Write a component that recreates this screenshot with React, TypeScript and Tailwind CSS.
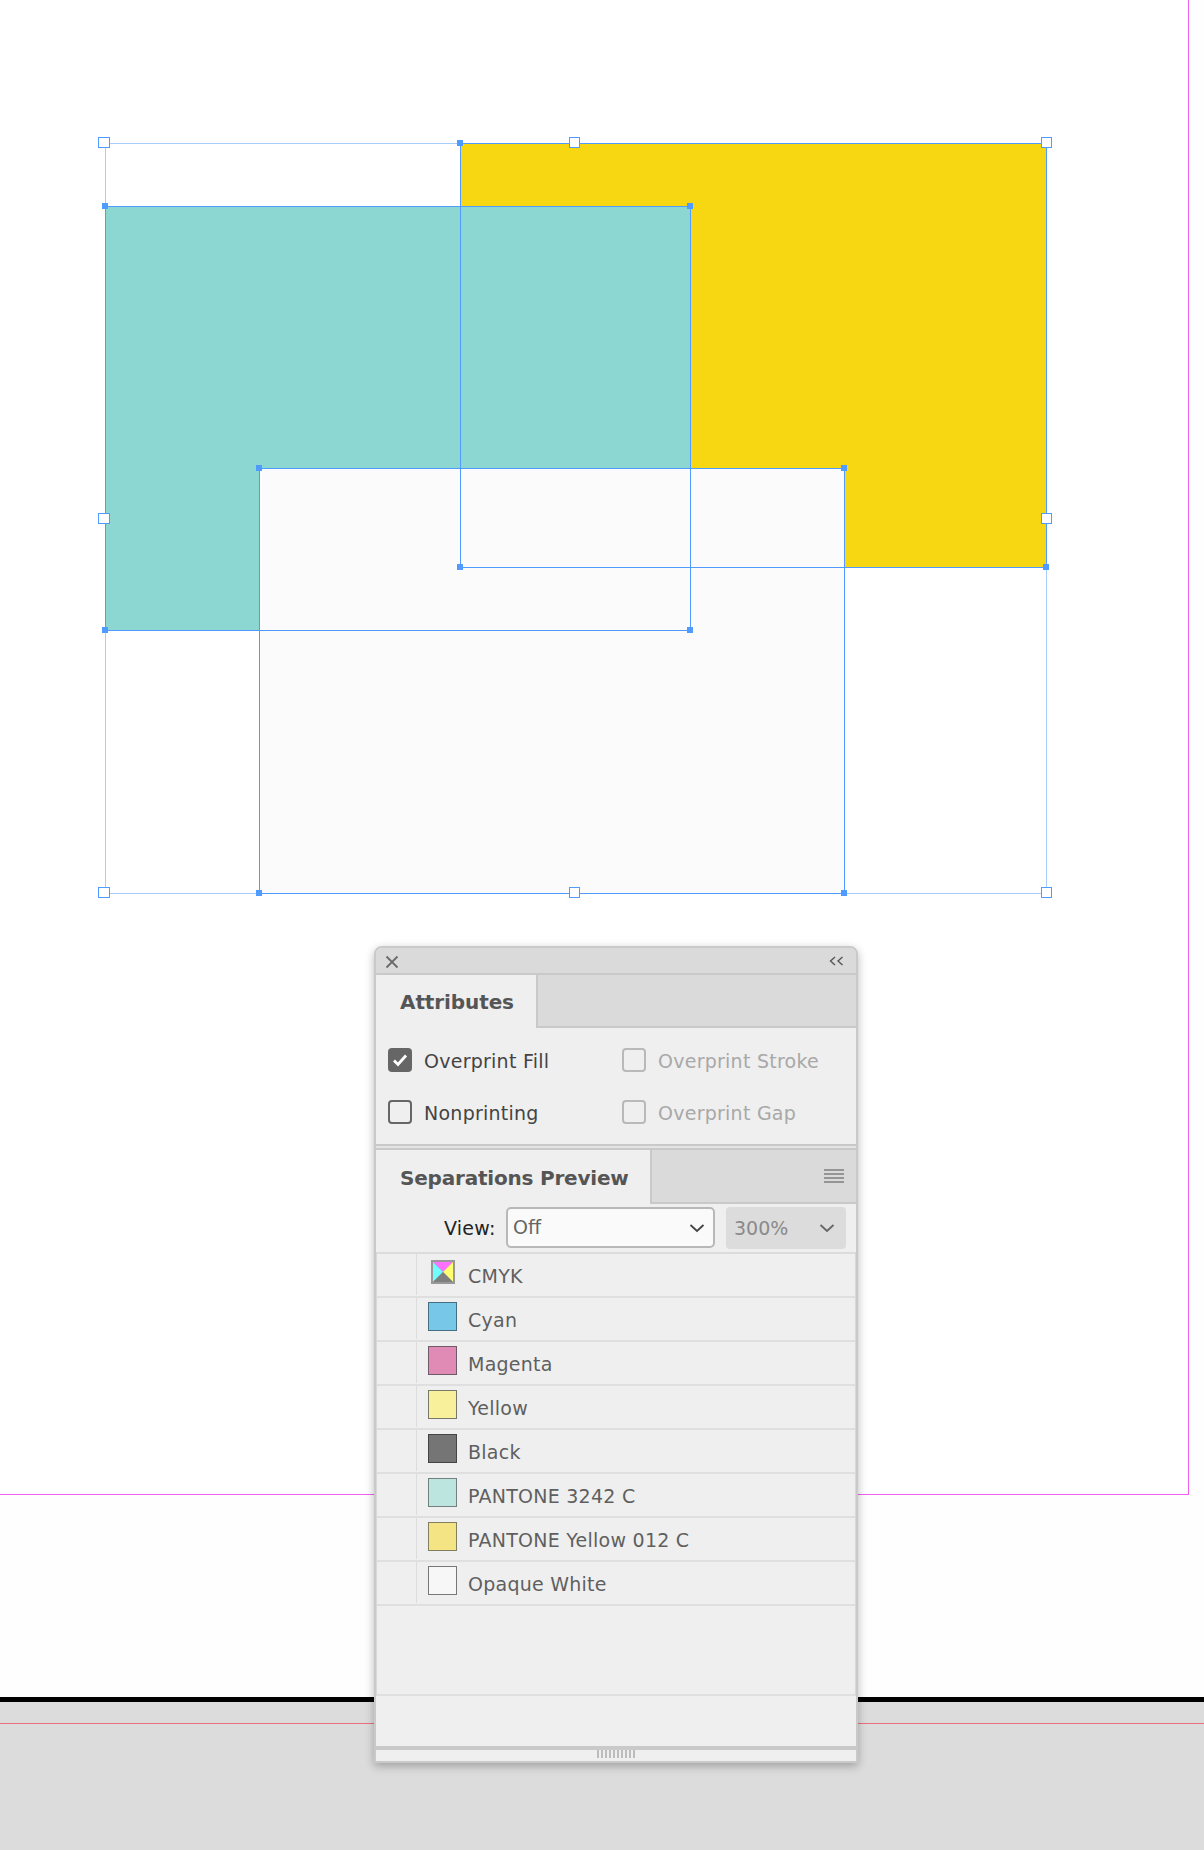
import React from "react";

const font = "font-['DejaVu_Sans','Liberation_Sans',sans-serif]";

const Big = ({ className }: { className: string }) => (
  <div className={`absolute h-[11px] bg-white border border-[#4f9bff] ${className}`} />
);

const Dot = ({ className }: { className: string }) => (
  <div className={`absolute w-[6px] h-[6px] bg-[#4f9bff] ${className}`} />
);

const Check = ({ label, on, off }: { label: string; on?: boolean; off?: boolean }) => (
  <div className="flex items-center gap-[12px] h-[24px]">
    {on ? (
      <div className="w-[24px] h-[24px] rounded-[4px] bg-[#666666] flex items-center justify-center">
        <svg width="16" height="14" viewBox="0 0 16 14" fill="none">
          <path d="M2 7.5 L6 11.5 L14 2.5" stroke="#ffffff" strokeWidth="2.8" />
        </svg>
      </div>
    ) : (
      <div className={`w-[24px] h-[24px] rounded-[4px] border-2 ${off ? "border-[#b9b9b9]" : "border-[#666666]"}`} />
    )}
    <span className={`mt-[2px] text-[19px] tracking-[0.25px] ${off ? "text-[#a8a8a8]" : "text-[#444444]"}`}>{label}</span>
  </div>
);

const Chevron = ({ color }: { color: string }) => (
  <svg width="16" height="10" viewBox="0 0 16 10" fill="none">
    <path d="M1.5 2 L8 8 L14.5 2" stroke={color} strokeWidth="1.8" />
  </svg>
);

const Row = ({ name, swatch }: { name: string; swatch?: string }) => (
  <div className="flex h-[44px] border-b-2 border-[#dfdfdf]">
    <div className="w-[40px] border-r border-[#dcdcdc] h-[41px]" />
    {swatch ? (
      <div className={`ml-[11px] mt-[4px] w-[29px] h-[29px] border ${swatch}`} />
    ) : (
      <svg className="ml-[14px] mt-[6px]" width="24" height="24" viewBox="0 0 24 24">
        <rect width="24" height="24" fill="#999999" />
        <path d="M2 2 H22 L12 12 Z" fill="#ff70ff" />
        <path d="M2 2 V22 L12 12 Z" fill="#70ffff" />
        <path d="M22 2 V22 L12 12 Z" fill="#ffff70" />
        <path d="M2 22 H22 L12 12 Z" fill="#7f7f7f" />
      </svg>
    )}
    <span className={`${swatch ? "ml-[11px]" : "ml-[13px]"} mt-[9px] text-[19px] leading-[26px] tracking-[0.25px] text-[#5f5f5f]`}>{name}</span>
  </div>
);

const rows = [
  { name: "Cyan", swatch: "bg-[#76c7e8] border-[#456f80]" },
  { name: "Magenta", swatch: "bg-[#e08bb6] border-[#6f5a68]" },
  { name: "Yellow", swatch: "bg-[#f8f09a] border-[#77776a]" },
  { name: "Black", swatch: "bg-[#757575] border-[#444444]" },
  { name: "PANTONE 3242 C", swatch: "bg-[#bde5e0] border-[#728080]" },
  { name: "PANTONE Yellow 012 C", swatch: "bg-[#f5e483] border-[#808060]" },
  { name: "Opaque White", swatch: "bg-[#f7f7f7] border-[#777777]" },
];

export default function App() {
  return (
    <div className={`relative w-[1204px] h-[1850px] flex flex-col overflow-hidden bg-[#dcdcdc] ${font}`}>
      {/* page */}
      <div className="h-[1697px] bg-[#fefefe]">
        <div className="w-[1189px] h-[1495px] bg-white border-r border-b border-[#f060f0]" />
      </div>
      <div className="h-[5px] bg-black" />
      <div className="mt-[21px] h-px bg-[#e8707f]" />

      {/* artwork fills */}
      <div className="absolute left-[460px] top-[143px] w-[587px] h-[425px] bg-[#f7d712]" />
      <div className="absolute left-[105px] top-[206px] w-[586px] h-[425px] bg-[#8dd7d2]" />
      <div className="absolute left-[259px] top-[468px] w-[586px] h-[426px] bg-[#fbfbfb]" />

      {/* selection outlines */}
      <div className="absolute left-[105px] top-[143px] w-[942px] h-[751px] border border-[#a8cdfb]" />
      <div className="absolute left-[460px] top-[143px] w-[587px] h-[425px] border border-[#4f9bff]" />
      <div className="absolute left-[105px] top-[206px] w-[586px] h-[425px] border border-[#4f9bff]" />
      <div className="absolute left-[259px] top-[468px] w-[586px] h-[426px] border border-[#4f9bff]" />

      <Dot className="left-[457px] top-[140px]" />
      <Dot className="left-[457px] top-[564px]" />
      <Dot className="left-[1043px] top-[564px]" />
      <Dot className="left-[102px] top-[203px]" />
      <Dot className="left-[687px] top-[203px]" />
      <Dot className="left-[102px] top-[627px]" />
      <Dot className="left-[687px] top-[627px]" />
      <Dot className="left-[256px] top-[465px]" />
      <Dot className="left-[841px] top-[465px]" />
      <Dot className="left-[256px] top-[890px]" />
      <Dot className="left-[841px] top-[890px]" />

      <Big className="w-[12px] left-[98px] top-[137px]" />
      <Big className="w-[11px] left-[569px] top-[137px]" />
      <Big className="w-[11px] left-[1041px] top-[137px]" />
      <Big className="w-[12px] left-[98px] top-[513px]" />
      <Big className="w-[11px] left-[1041px] top-[513px]" />
      <Big className="w-[12px] left-[98px] top-[887px]" />
      <Big className="w-[11px] left-[569px] top-[887px]" />
      <Big className="w-[11px] left-[1041px] top-[887px]" />

      {/* panel */}
      <div className="absolute left-[374px] top-[946px] w-[484px] h-[817px] flex flex-col border-2 border-[#c9c9c9] rounded-t-[8px] bg-[#efefef] shadow-[0_3px_10px_rgba(0,0,0,0.28)]">
        <div className="h-[27px] shrink-0 flex items-center justify-between pl-[9px] pr-[12px] bg-[#dadada] border-b-2 border-[#c9c9c9] rounded-t-[6px]">
          <svg className="mt-[2px]" width="14" height="14" viewBox="0 0 14 14" fill="none">
            <path d="M1.5 1.5 L12.5 12.5 M12.5 1.5 L1.5 12.5" stroke="#6a6a6a" strokeWidth="1.8" />
          </svg>
          <svg width="15" height="10" viewBox="0 0 15 10" fill="none">
            <path d="M6 1 L1.5 5 L6 9 M13.5 1 L9 5 L13.5 9" stroke="#555555" strokeWidth="1.4" />
          </svg>
        </div>

        <div className="h-[53px] shrink-0 flex">
          <div className="w-[162px] border-r-2 border-[#c9c9c9] pl-[24px] pt-[13px] text-[20px] font-bold leading-[28px] tracking-[-0.1px] text-[#555555]">Attributes</div>
          <div className="flex-1 bg-[#dadada] border-b-2 border-[#c9c9c9]" />
        </div>

        <div className="h-[116px] shrink-0 pt-[20px] pl-[12px] grid grid-cols-[234px_1fr] auto-rows-[24px] gap-y-[28px]">
          <Check label="Overprint Fill" on />
          <Check label="Overprint Stroke" off />
          <Check label="Nonprinting" />
          <Check label="Overprint Gap" off />
        </div>

        <div className="h-[6px] shrink-0 bg-[#e4e4e4] border-y-2 border-[#c9c9c9]" />

        <div className="h-[54px] shrink-0 flex">
          <div className="w-[276px] border-r-2 border-[#c9c9c9] pl-[24px] pt-[14px] text-[20px] font-bold leading-[28px] tracking-[-0.2px] whitespace-nowrap text-[#555555]">Separations Preview</div>
          <div className="flex-1 bg-[#dadada] border-b-2 border-[#c9c9c9] flex justify-end items-center pr-[12px]">
            <svg className="mt-[1px]" width="20" height="15" viewBox="0 0 20 15">
              <path d="M0 1 H20 M0 5 H20 M0 9 H20 M0 13 H20" stroke="#7f7f7f" strokeWidth="1.6" />
            </svg>
          </div>
        </div>

        <div className="h-[48px] shrink-0 flex items-start pt-[3px]">
          <span className="ml-[68px] w-[62px] mt-[8px] text-[19px] leading-[26px] tracking-[0.25px] text-[#222222]">View:</span>
          <div className="w-[209px] h-[41px] flex items-center justify-between pl-[5px] pr-[8px] bg-[#fafafa] border-2 border-[#b8b8b8] rounded-[5px] text-[19px] text-[#666666]">
            Off
            <Chevron color="#444444" />
          </div>
          <div className="ml-[11px] w-[120px] h-[42px] flex items-center justify-between pl-[8px] pr-[11px] bg-[#dcdcdc] rounded-[4px] text-[19px] text-[#8a8a8a]">
            300%
            <Chevron color="#666666" />
          </div>
        </div>

        <div className="flex-1 flex flex-col border-x border-[#d8d8d8]">
          <div className="border-t-2 border-[#dcdcdc]">
            <Row name="CMYK" />
            {rows.map((r) => (
              <Row key={r.name} name={r.name} swatch={r.swatch} />
            ))}
          </div>
          <div className="h-[90px] shrink-0 border-b-2 border-[#dfdfdf]" />
        </div>

        <div className="h-[50px] shrink-0" />
        <div className="h-[4px] shrink-0 bg-[#c9c9c9]" />
        <div className="h-[11px] shrink-0 flex justify-center items-start gap-[2px]">
          {Array.from({ length: 10 }).map((_, i) => (
            <div key={i} className="w-[2px] h-[8px] bg-[#bcbcbc]" />
          ))}
        </div>
      </div>
    </div>
  );
}
